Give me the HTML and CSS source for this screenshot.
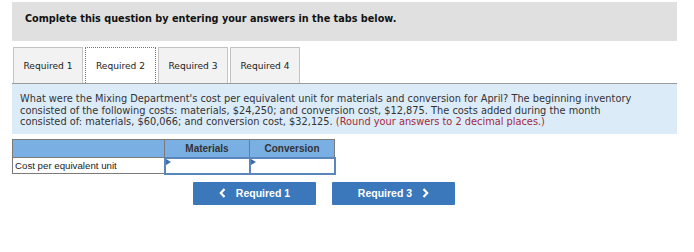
FILE: index.html
```html
<!DOCTYPE html>
<html>
<head>
<meta charset="utf-8">
<link rel="stylesheet" href="styles.css">
</head>
<body>
<div class="page">
  <div class="instructions">Complete this question by entering your answers in the tabs below.</div>
  <div class="tabs">
    <div class="tab">Required 1</div>
    <div class="tab active">Required 2</div>
    <div class="tab">Required 3</div>
    <div class="tab">Required 4</div>
  </div>
  <div class="question">What were the Mixing Department's cost per equivalent unit for materials and conversion for April? The beginning inventory consisted of the following costs: materials, $24,250; and conversion cost, $12,875. The costs added during the month consisted of: materials, $60,066; and conversion cost, $32,125. <span class="hint">(Round your answers to 2 decimal places.)</span></div>
  <table class="grid">
    <tr class="head">
      <th class="label-col"></th>
      <th class="val-col">Materials</th>
      <th class="val-col">Conversion</th>
    </tr>
    <tr class="body">
      <td class="label">Cost per equivalent unit</td>
      <td class="input"><span class="flag"></span></td>
      <td class="input"><span class="flag"></span></td>
    </tr>
  </table>
  <div class="nav">
    <button class="btn"><svg class="chev" width="7" height="10" viewBox="0 0 7 10"><path d="M5.5 1 L1.8 5 L5.5 9" fill="none" stroke="#fff" stroke-width="2.2"/></svg><span>Required 1</span></button>
    <button class="btn"><span>Required 3</span><svg class="chev" width="7" height="10" viewBox="0 0 7 10"><path d="M1.5 1 L5.2 5 L1.5 9" fill="none" stroke="#fff" stroke-width="2.2"/></svg></button>
  </div>
</div>
</body>
</html>
```
FILE: styles.css
```css
html, body {
  margin: 0;
  padding: 0;
  background: #fff;
}
.page {
  padding: 2px 0 0 12px;
  width: 665px;
  font-family: "DejaVu Sans", Verdana, sans-serif;
}
.instructions {
  background: #e0e0e0;
  height: 39px;
  box-sizing: border-box;
  padding: 10px 0 0 13px;
  font-size: 9.7px;
  font-weight: bold;
  line-height: 13px;
  color: #111;
}
.tabs {
  display: flex;
  gap: 2px;
  margin-top: 6px;
  padding-left: 1px;
  border-bottom: 1px solid #9a9a9a;
  height: 36px;
}
.tab {
  width: 70px;
  box-sizing: border-box;
  background: #f2f2f2;
  border: 1px solid #c4c4c4;
  border-bottom: none;
  font-size: 9.1px;
  color: #222;
  display: flex;
  align-items: center;
  justify-content: center;
}
.tab.active {
  background: #fff;
  border: 1px dotted #5a7aa0;
  border-bottom: none;
  width: 71px;
}
.question {
  background: #dcebf8;
  padding: 9px 30px 0 8px;
  height: 50px;
  box-sizing: border-box;
  font-size: 9.8px;
  line-height: 11.6px;
  color: #333;
}
.hint {
  display: inline-block;
  color: #a4283b;
}
.grid {
  margin-top: 5px;
  border-collapse: collapse;
  font-family: "Liberation Sans", Arial, sans-serif;
  font-size: 9.7px;
}
.grid th, .grid td {
  border: 1px solid #7a7a7a;
  padding: 0;
}
.head {
  background: #7aafe3;
  height: 18px;
}
.head th {
  font-weight: bold;
  font-size: 10px;
  color: #333;
}
.label-col { width: 151px; }
.val-col { width: 84px; }
.body { height: 16px; }
.label {
  padding-left: 2px !important;
  color: #222;
}
.grid td.input {
  border: 2px solid #5b86bd;
  position: relative;
  background: #fff;
}
.flag {
  position: absolute;
  left: 0;
  top: 0;
  width: 0;
  height: 0;
  border-top: 3px solid transparent;
  border-bottom: 3px solid transparent;
  border-left: 5px solid #3d6fb0;
}
.nav {
  display: flex;
  gap: 16px;
  margin-top: 7px;
  padding-left: 181px;
}
.btn {
  width: 123px;
  height: 23px;
  background: #3b77bb;
  border: none;
  border-radius: 1px;
  color: #fff;
  font-family: "Liberation Sans", Arial, sans-serif;
  font-weight: bold;
  font-size: 10.5px;
  display: flex;
  align-items: center;
  justify-content: center;
  gap: 10px;
  padding: 0;
}
.chev { display: block; }
```
